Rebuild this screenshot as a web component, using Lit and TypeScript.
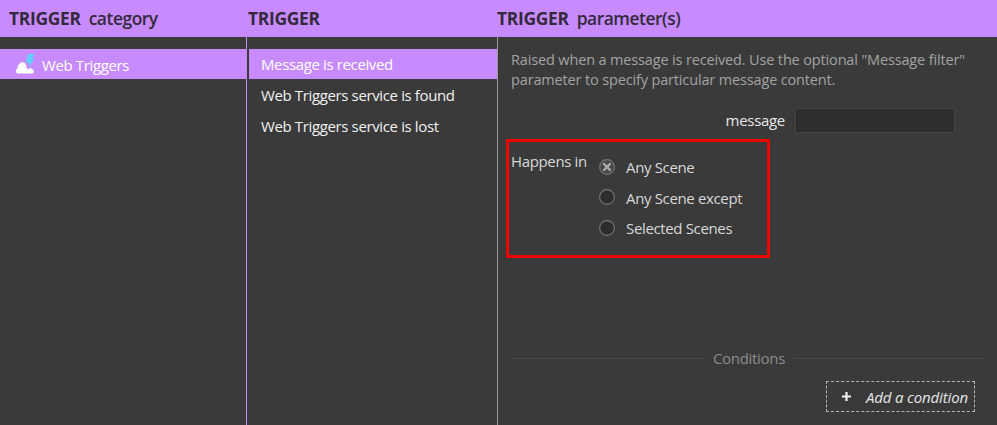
import { LitElement, html, svg, css } from "lit";
import { customElement } from "lit/decorators.js";

@customElement("app-root")
export class AppRoot extends LitElement {
  static styles = css`
    :host { display: block; width: 997px; height: 425px; overflow: hidden; background: #3a3a3a; font-family: "Open Sans", "Noto Sans", sans-serif; font-size: 15px; color: #f0f0f0; }
    .heads { display: grid; grid-template-columns: 248px 249px 1fr; height: 37px; background: #c78bff; color: #33293b; font-size: 17.4px; }
    .head { display: flex; align-items: center; padding-bottom: 2px; font-weight: 600; gap: 8px; letter-spacing: -0.45px; white-space: nowrap; }
    .head:first-child { padding-left: 9px; }
    .head b { font-weight: 700; letter-spacing: -0.3px; }
    .body { display: grid; grid-template-columns: 247px 251px 1fr; height: 388px; }
    .col { padding-top: 12px; display: flex; flex-direction: column; }
    .c1 { border-right: 1px solid #c78bff; }
    .c2 { border-right: 1px solid #9a9a9a; padding-left: 2px; gap: 1px; }
    .row { height: 30px; display: flex; align-items: center; padding-left: 12px; letter-spacing: -0.37px; white-space: nowrap; }
    .row.sel { background: #c78bff; color: #fff; }
    .c1 .row { padding-left: 15px; gap: 7px; padding-top: 2px; box-sizing: border-box; }
    .c1 svg { display: block; overflow: visible; }
    .c3 { padding: 13px 10px 0 13px; display: flex; flex-direction: column; }
    .desc { color: #a3a3a3; font-size: 14.5px; line-height: 20px; letter-spacing: -0.15px; white-space: nowrap; }
    .msg { display: flex; justify-content: flex-end; align-items: center; gap: 10px; margin-top: 18px; padding-right: 32px; color: #e8e8e8; letter-spacing: -0.3px; }
    .msg span { padding-bottom: 2px; }
    .input { width: 158px; height: 23px; background: #2e2e2e; border: 1px solid #454545; border-radius: 2px; }
    .box { margin: 6px 0 0 -5px; width: 264px; height: 119px; box-sizing: border-box; border: 3px solid #f00000; display: flex; padding: 9px 0 0 2px; color: #d8d8d8; letter-spacing: -0.35px; }
    .hap { width: 88px; white-space: nowrap; line-height: 21px; }
    .opts { display: flex; flex-direction: column; gap: 10.5px; padding-top: 5.6px; }
    .opt { display: flex; align-items: center; gap: 11px; height: 20px; white-space: nowrap; }
    .opt span { padding-top: 1px; }
    .radio { display: block; width: 16px; height: 16px; }
    .div { display: flex; align-items: center; gap: 8px; margin: 90px 0 0 0; color: #8c8c8c; letter-spacing: -0.3px; }
    .div i { flex: 1; height: 1px; background: #484848; }
    .add { align-self: flex-end; margin: 13px 12px 0 0; width: 149px; height: 31px; box-sizing: border-box; border: 1px dashed #b5b5b5; display: flex; align-items: center; padding-left: 14px; gap: 14px; font-style: italic; color: #e6e6e6; letter-spacing: -0.15px; white-space: nowrap; }
    .add svg { display: block; }
  `;

  radio(checked: boolean) {
    return html`<svg class="radio" viewBox="0 0 16 16">
      <circle cx="8" cy="8" r="7.4" fill="${checked ? "#464646" : "#2d2d2d"}" stroke="#777" stroke-width="1.1"></circle>
      ${checked ? svg`<path d="M4.4 4.4 L11.6 11.6 M11.6 4.4 L4.4 11.6" stroke="#a8a8a8" stroke-width="2.4"></path>` : ""}
    </svg>`;
  }

  render() {
    return html`
      <div class="heads">
        <div class="head"><b>TRIGGER</b> category</div>
        <div class="head"><b>TRIGGER</b></div>
        <div class="head"><b>TRIGGER</b> parameter(s)</div>
      </div>
      <div class="body">
      <div class="col c1">
        <div class="row sel">
          <svg width="20" height="20" viewBox="0 0 20 20">
            <path d="M13 -1 L19.5 -1 L17 4 L19.5 4 L13.5 13 L14.5 8 L11 8 Z" fill="#5fd0ff"></path>
            <path d="M3 18.5 C0.5 18.5 0 14.5 2.5 13.5 C2.5 9.5 6 6 9 7.5 C11 8.5 11.5 11 11.5 13 L13 14.5 C14 12.5 17 13 17.5 14.5 C19.5 15 19.5 18.5 17 18.5 Z" fill="#fff"></path>
          </svg>
          <span>Web Triggers</span>
        </div>
      </div>
      <div class="col c2">
        <div class="row sel">Message is received</div>
        <div class="row">Web Triggers service is found</div>
        <div class="row">Web Triggers service is lost</div>
      </div>
      <div class="c3">
        <div class="desc">Raised when a message is received. Use the optional "Message filter"<br />parameter to specify particular message content.</div>
        <div class="msg"><span>message</span><div class="input"></div></div>
        <div class="box">
          <div class="hap">Happens in</div>
          <div class="opts">
            <div class="opt">${this.radio(true)}<span>Any Scene</span></div>
            <div class="opt">${this.radio(false)}<span>Any Scene except</span></div>
            <div class="opt">${this.radio(false)}<span>Selected Scenes</span></div>
          </div>
        </div>
        <div class="div"><i></i><span>Conditions</span><i></i></div>
        <div class="add">
          <svg width="11" height="11" viewBox="0 0 11 11"><path d="M5.5 1 V10 M1 5.5 H10" stroke="#f0f0f0" stroke-width="2.2"></path></svg>
          <span>Add a condition</span>
        </div>
      </div>
      </div>`;
  }
}
